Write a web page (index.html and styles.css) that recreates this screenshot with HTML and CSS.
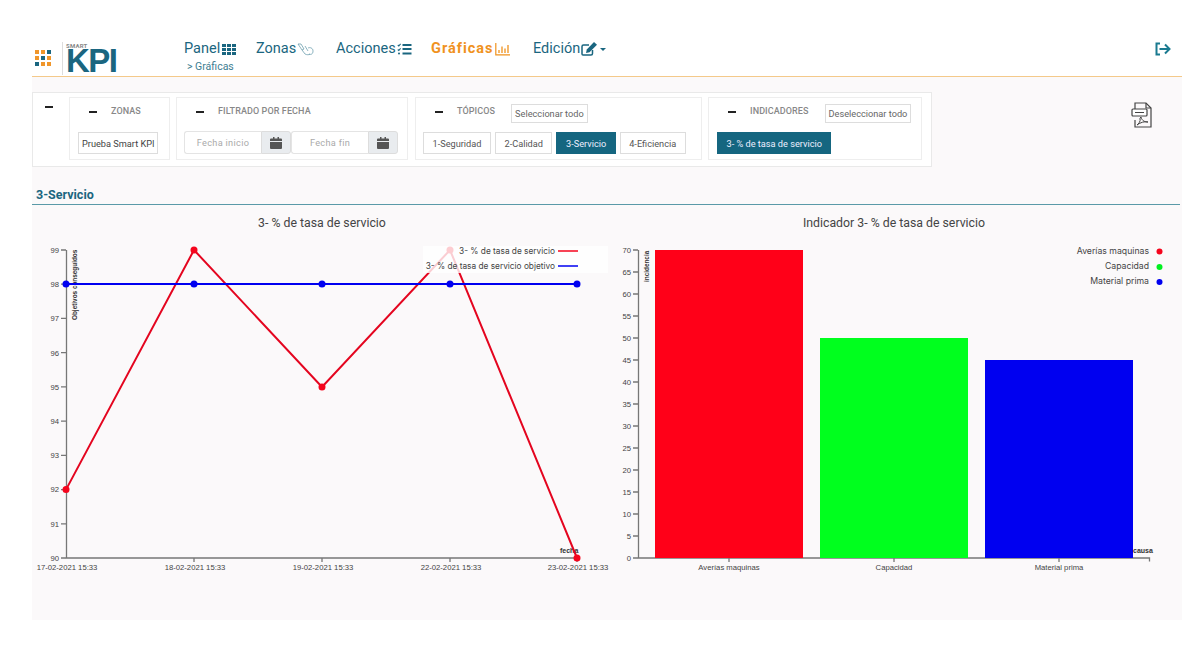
FILE: index.html
```html
<!DOCTYPE html>
<html lang="en">
<head>
    <meta charset="UTF-8">
    <title>Smart KPI</title>
    <link rel="stylesheet" href="styles.css">
</head>
<body>
<div class="page">

    <!-- Header -->
    <header class="topbar">
        <div class="logo">
            <div class="logo-dots">
                <i class="o"></i><i class="o"></i><i class="t"></i>
                <i class="o"></i><i class="t"></i><i class="o"></i>
                <i class="t"></i><i class="o"></i><i class="o"></i>
            </div>
            <div class="logo-word">
                <span class="logo-smart">SMART</span>
                <span class="logo-kpi">KPI</span>
            </div>
        </div>
        <nav class="nav">
            <div class="nav-item nav-panel">
                <a>Panel
                    <svg width="16" height="13" viewBox="0 0 16 13"><path fill="#1a6680" d="M1 1h4v3H1zM6 1h4v3H6zM11 1h4v3h-4zM1 5h4v3H1zM6 5h4v3H6zM11 5h4v3h-4zM1 9h4v3H1zM6 9h4v3H6zM11 9h4v3h-4z"/></svg>
                </a>
                <span class="crumb">&gt; Gráficas</span>
            </div>
            <div class="nav-item nav-zonas">
                <a>Zonas
                    <svg width="18" height="13" viewBox="0 0 18 13" fill="none" stroke="#5b93a5" stroke-width=".7"><path d="M1 1l4 6 2-1-3-5zM5 7l3 4c2 1 4 1 5 0M8 3l3 5M11 5c2-1 5 0 5 3s-2 4-4 3"/></svg>
                </a>
            </div>
            <div class="nav-item nav-acciones">
                <a>Acciones
                    <svg width="15" height="12" viewBox="0 0 15 12" fill="none" stroke="#1a6680"><path stroke-width="1.1" d="M.8 2l1 1L3.600.8M.8 6.500l1 1 1.800-2.200"/><circle cx="2" cy="10.500" r="1" fill="#1a6680" stroke="none"/><path stroke-width="1.800" d="M5.500 2H14.500M5.500 6H14.500M5.500 10.500H14.500"/></svg>
                </a>
            </div>
            <div class="nav-item nav-graficas">
                <a>Gráficas
                    <svg width="15" height="13" viewBox="0 0 15 13" fill="none" stroke="#f0921e"><path stroke-width="1.200" d="M.8 0v11.800H15"/><path stroke-width="1.300" d="M4 10V7M7 10V3.500M10 10V5.500M13 10V2"/></svg>
                </a>
            </div>
            <div class="nav-item nav-edicion">
                <a>Edición
                    <svg width="16" height="14" viewBox="0 0 16 14"><path fill="none" stroke="#1a6680" stroke-width="1.500" d="M8 3H2.500A1.500 1.500 0 0 0 1 4.500v7.500A1 1 0 0 0 2 13h8a1.500 1.500 0 0 0 1.500-1.500V8"/><path fill="#1a6680" d="M13 0l3 2.800L8.500 10.200 5 11l.8-3.500z"/></svg>
                    <span class="caret"></span>
                </a>
            </div>
        </nav>
        <svg class="logout" width="16" height="14" viewBox="0 0 16 14" fill="none" stroke="#1a7a90" stroke-width="2"><path d="M5 1.500H1.500v11H5M4.500 7H14M10 2.500L14.500 7 10 11.500"/></svg>
    </header>

    <main class="content">

        <!-- Filters -->
        <div class="filter-row">
            <section class="filters">
                <span class="dash dash-main"></span>
                <div class="filter-card zonas-card">
                    <div class="filter-head"><span class="dash"></span><span class="filter-title">ZONAS</span></div>
                    <div class="btn-row"><button class="btn btn-zone">Prueba Smart KPI</button></div>
                </div>
                <div class="filter-card fecha-card">
                    <div class="filter-head"><span class="dash"></span><span class="filter-title">FILTRADO POR FECHA</span></div>
                    <div class="date-row">
                        <div class="date-input">
                            <span class="date-text">Fecha inicio</span>
                            <span class="date-btn"><svg width="12" height="12" viewBox="0 0 12 12"><path fill="#555" d="M1 1.500h2V0h1.500v1.500h3V0H9v1.500h2a1 1 0 0 1 1 1V4H0V2.500a1 1 0 0 1 1-1zM0 5h12v6a1 1 0 0 1-1 1H1a1 1 0 0 1-1-1z"/></svg></span>
                        </div>
                        <div class="date-input">
                            <span class="date-text">Fecha fin</span>
                            <span class="date-btn"><svg width="12" height="12" viewBox="0 0 12 12"><path fill="#555" d="M1 1.500h2V0h1.500v1.500h3V0H9v1.500h2a1 1 0 0 1 1 1V4H0V2.500a1 1 0 0 1 1-1zM0 5h12v6a1 1 0 0 1-1 1H1a1 1 0 0 1-1-1z"/></svg></span>
                        </div>
                    </div>
                </div>
                <div class="filter-card topicos-card">
                    <div class="filter-head"><span class="dash"></span><span class="filter-title">TÓPICOS</span><button class="btn-select">Seleccionar todo</button></div>
                    <div class="btn-row">
                        <button class="btn">1-Seguridad</button>
                        <button class="btn">2-Calidad</button>
                        <button class="btn active">3-Servicio</button>
                        <button class="btn">4-Eficiencia</button>
                    </div>
                </div>
                <div class="filter-card indicadores-card">
                    <div class="filter-head"><span class="dash"></span><span class="filter-title">INDICADORES</span><button class="btn-select">Deseleccionar todo</button></div>
                    <div class="btn-row"><button class="btn active">3- % de tasa de servicio</button></div>
                </div>
            </section>
            <svg class="pdf" width="22" height="26" viewBox="0 0 22 26" fill="none" stroke="#444" stroke-width="1.200">
                <path d="M4 7V1h11l5 5v19H4v-7"/>
                <path d="M15 1v5h5"/>
                <rect x="1" y="7" width="15" height="7" rx="1" fill="#fff"/>
                <path stroke-width="1" d="M4 10.500h9"/>
                <path d="M9 16c1 4-2 6-3 7 2-1 5-4 11-3-3 0-6-1-7-5z" stroke-width="1"/>
            </svg>
        </div>

        <h2 class="section-title">3-Servicio</h2>

        <!-- Charts -->
        <div class="charts">
            <div class="chart">
                <h3 class="chart-title">3- % de tasa de servicio</h3>
                <svg class="plot" width="580" height="350" viewBox="32 236 580 350">
                    <g class="axis-line">
                        <path d="M66.500 250V558H577"/>
                        <path d="M61 250h5M61 284.200h5M61 318.400h5M61 352.700h5M61 386.900h5M61 421.100h5M61 455.300h5M61 489.600h5M61 523.800h5M61 558h5"/>
                        <path d="M194 558v4M322 558v4M450 558v4M577 558v4"/>
                    </g>
                    <g class="tick" text-anchor="end">
                        <text x="59" y="253">99</text>
                        <text x="59" y="287">98</text>
                        <text x="59" y="321">97</text>
                        <text x="59" y="356">96</text>
                        <text x="59" y="390">95</text>
                        <text x="59" y="424">94</text>
                        <text x="59" y="458">93</text>
                        <text x="59" y="492">92</text>
                        <text x="59" y="527">91</text>
                        <text x="59" y="561">90</text>
                    </g>
                    <g class="tick" text-anchor="middle">
                        <text x="67" y="570">17-02-2021 15:33</text>
                        <text x="195" y="570">18-02-2021 15:33</text>
                        <text x="323" y="570">19-02-2021 15:33</text>
                        <text x="451" y="570">22-02-2021 15:33</text>
                        <text x="578" y="570">23-02-2021 15:33</text>
                    </g>
                    <text class="axis-name name-long" transform="translate(77 320) rotate(-90)">Objetivos conseguidos</text>
                    <text class="axis-name" x="560" y="553">fecha</text>
                    <polyline class="line-red" points="66,489.600 194,250 322,387 450,250 577,558"/>
                    <polyline class="line-blue" points="66,284 577,284"/>
                    <g fill="#f5051d">
                        <circle cx="66" cy="489.600" r="3.500"/><circle cx="194" cy="250" r="3.500"/><circle cx="322" cy="387" r="3.500"/><circle cx="450" cy="250" r="3.500"/><circle cx="577" cy="558" r="3.500"/>
                    </g>
                    <g fill="#0000f0">
                        <circle cx="66" cy="284" r="3.500"/><circle cx="194" cy="284" r="3.500"/><circle cx="322" cy="284" r="3.500"/><circle cx="450" cy="284" r="3.500"/><circle cx="577" cy="284" r="3.500"/>
                    </g>
                    <rect x="423" y="246" width="185" height="27" fill="#fff" fill-opacity=".8"/>
                    <g class="legend legend-line" text-anchor="end">
                        <text x="555" y="254">3- % de tasa de servicio</text>
                        <text x="555" y="269">3- % de tasa de servicio objetivo</text>
                    </g>
                    <path d="M558 251h20" stroke="#f5051d" stroke-width="1.500"/>
                    <path d="M558 266h20" stroke="#0000f0" stroke-width="1.500"/>
                </svg>
            </div>
            <div class="chart">
                <h3 class="chart-title">Indicador 3- % de tasa de servicio</h3>
                <svg class="plot" width="564" height="350" viewBox="612 236 564 350">
                    <g class="axis-line">
                        <path d="M638.500 250V558H1149.500v3.500"/>
                        <path d="M633 250h5M633 272h5M633 294h5M633 316h5M633 338h5M633 360h5M633 382h5M633 404h5M633 426h5M633 448h5M633 470h5M633 492h5M633 514h5M633 536h5M633 558h5"/>
                        <path d="M729 558v4M894 558v4M1059 558v4"/>
                    </g>
                    <g class="tick" text-anchor="end">
                        <text x="631" y="253">70</text>
                        <text x="631" y="275">65</text>
                        <text x="631" y="297">60</text>
                        <text x="631" y="319">55</text>
                        <text x="631" y="341">50</text>
                        <text x="631" y="363">45</text>
                        <text x="631" y="385">40</text>
                        <text x="631" y="407">35</text>
                        <text x="631" y="429">30</text>
                        <text x="631" y="451">25</text>
                        <text x="631" y="473">20</text>
                        <text x="631" y="495">15</text>
                        <text x="631" y="517">10</text>
                        <text x="631" y="539">5</text>
                        <text x="631" y="561">0</text>
                    </g>
                    <rect x="655" y="250" width="148" height="308" fill="#ff0018"/>
                    <rect x="820" y="338" width="148" height="220" fill="#00ff1e"/>
                    <rect x="985" y="360" width="148" height="198" fill="#0000f0"/>
                    <g class="tick" text-anchor="middle">
                        <text x="729" y="570">Averías maquinas</text>
                        <text x="894" y="570">Capacidad</text>
                        <text x="1059" y="570">Material prima</text>
                    </g>
                    <text class="axis-name name-long" transform="translate(649 282) rotate(-90)">incidencia</text>
                    <text class="axis-name" x="1133" y="553">causa</text>
                    <g class="legend" text-anchor="end">
                        <text x="1149" y="254">Averías maquinas</text>
                        <text x="1149" y="269">Capacidad</text>
                        <text x="1149" y="284">Material prima</text>
                    </g>
                    <circle cx="1159.500" cy="251.500" r="3" fill="#f5051d"/>
                    <circle cx="1159.500" cy="267" r="3" fill="#00f020"/>
                    <circle cx="1159.500" cy="282" r="3" fill="#0000f0"/>
                </svg>
            </div>
        </div>
    </main>
</div>
</body>
</html>
```

FILE: styles.css
```css
* {
    margin: 0;
    padding: 0;
    box-sizing: border-box;
}
body {
    background: #fff;
    font-family: 'Roboto', sans-serif;
    color: #444;
}
.page {
    width: 1150px;
    margin-left: 32px;
    padding-top: 40px;
}

/* Header */
.topbar {
    display: flex;
    height: 37px;
    border-bottom: 1px solid #f4c98a;
    position: relative;
}
.logo { display: flex; width: 152px; padding: 10px 0 0 3px; }
.logo-dots {
    display: grid;
    grid-template-columns: repeat(3, 4px);
    grid-auto-rows: 4px;
    gap: 2px;
    margin-right: 11px;
}
.logo-dots i { display: block; }
.logo-dots .o { background: #f0962a; }
.logo-dots .t { background: #1a6680; }
.logo-word {
    display: flex;
    flex-direction: column;
    margin-top: -8px;
    padding-left: 3px;
    border-left: 1px solid #ddd;
    height: 33px;
}
.logo-smart { font-size: 6px; line-height: 7px; color: #888; font-weight: 700; letter-spacing: .2px; }
.logo-kpi {
    font-family: 'Liberation Sans', sans-serif;
    font-weight: 700;
    font-size: 33px;
    line-height: 24px;
    color: #1a6680;
    letter-spacing: -1.500px;
}
.nav { display: flex; }
.nav-item a { display: flex; align-items: center; gap: 1px; font-size: 14.500px; line-height: 18px; color: #1a6680; }
.nav-item { position: relative; }
.nav-panel { width: 72px; }
.nav-zonas { width: 80px; }
.nav-acciones { width: 95px; }
.nav-graficas { width: 102px; }
.nav-graficas a { color: #f0921e; font-weight: 700; letter-spacing: 1px; }
.crumb { display: block; font-size: 10.500px; line-height: 13px; margin: 2px 0 0 3px; color: #3d7d92; }
.caret {
    border-top: 3px solid #1a6680;
    border-left: 3px solid transparent;
    border-right: 3px solid transparent;
    margin-left: 2px;
}
.logout { position: absolute; top: 2px; right: 11px; }

/* Filters */
.content { background: #fbf9fa; height: 543px; padding-top: 15px; }
.filter-row { display: flex; }
.filters {
    display: flex;
    width: 900px;
    height: 75px;
    padding: 4px 0 0 36px;
    background: #fff;
    border: 1px solid #e9e9e9;
    position: relative;
}
.filter-card { height: 63px; border: 1px solid #eee; background: #fff; padding: 0 7px; }
.zonas-card { width: 101px; margin-right: 6px; }
.fecha-card { width: 232px; margin-right: 7px; }
.topicos-card { width: 287px; margin-right: 6px; }
.indicadores-card { width: 214px; }
.indicadores-card .btn { margin-left: 1px; }
.filter-head { display: flex; align-items: center; height: 27px; white-space: nowrap; }
.filter-title { font-size: 9px; font-weight: 500; color: #888; margin: 0 0 2px 14px; letter-spacing: .1px; }
.dash { display: block; width: 8px; height: 2px; background: #222; margin-left: 12px; }
.dash-main { position: absolute; left: 12px; top: 13px; margin: 0; }
.btn-row { display: flex; gap: 4px; margin-top: 7px; }
.btn {
    height: 22px;
    padding: 0 8.500px;
    font-family: 'Roboto', sans-serif;
    font-size: 9.200px;
    color: #555;
    background: #fff;
    border: 1px solid #ddd;
    white-space: nowrap;
}
.btn-zone { padding: 0 3px; margin-left: 1px; color: #444; }
.btn.active { background: #156680; border-color: #156680; color: #eef; }
.btn-select {
    height: 19px;
    margin: 3px 0 0 16px;
    padding: 0 3px;
    font-family: 'Roboto', sans-serif;
    font-size: 9.200px;
    color: #666;
    background: #fff;
    border: 1px solid #ddd;
    white-space: nowrap;
}
.date-row { display: flex; margin-top: 6px; }
.date-input { display: flex; width: 107px; height: 23px; }
.date-text {
    flex: 1;
    font-size: 9.200px;
    line-height: 21px;
    text-align: center;
    color: #aaa;
    letter-spacing: .3px;
    border: 1px solid #e4e4e4;
    border-right: 0;
    border-radius: 3px 0 0 3px;
}
.date-btn {
    width: 30px;
    display: flex;
    align-items: center;
    justify-content: center;
    background: #e9ecef;
    border: 1px solid #ddd;
    border-radius: 0 3px 3px 0;
}
.pdf { margin: 10px 0 0 199px; }

/* Section */
.section-title {
    margin-top: 20px;
    height: 18px;
    padding-left: 4px;
    font-size: 12.500px;
    line-height: 15px;
    font-weight: 700;
    color: #1a6680;
    border-bottom: 1px solid #5a9aa8;
    width: 1148px;
}

/* Charts */
.charts { display: grid; grid-template-columns: 580px 564px; }
.chart-title {
    padding-top: 9px;
    height: 31px;
    font-size: 12.300px;
    line-height: 18px;
    font-weight: 400;
    text-align: center;
    color: #444;
}
.plot { display: block; }
.axis-line path { fill: none; stroke: #777; stroke-width: 1.300; }
.tick text { font-family: 'Liberation Sans', sans-serif; font-size: 7.700px; fill: #444; }
.axis-name { font-family: 'Liberation Sans', sans-serif; font-size: 7px; font-weight: 700; fill: #333; }
.name-long { font-size: 6.400px; }
.legend text { font-family: 'Inter', sans-serif; font-size: 8.700px; fill: #444; }
.legend-line text { font-size: 8.300px; }
.line-red, .line-blue { fill: none; stroke-width: 2; }
.line-red { stroke: #e4051f; }
.line-blue { stroke: #0000f0; }
```
